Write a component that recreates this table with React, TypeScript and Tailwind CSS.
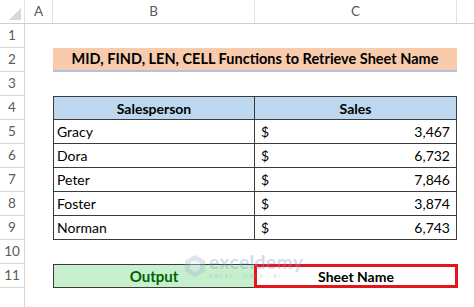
const font = { fontFamily: "Lato, 'Open Sans', 'Liberation Sans', sans-serif" };

const rowsData = [
  { name: 'Gracy', sales: '3,467' },
  { name: 'Dora', sales: '6,732' },
  { name: 'Peter', sales: '7,846' },
  { name: 'Foster', sales: '3,874' },
  { name: 'Norman', sales: '6,743' },
];

function RowHead({ n }: { n?: number }) {
  return (
    <div className="w-[25px] shrink-0 h-full flex items-center justify-center border-r border-b border-[#d6d6d6] text-[13.5px] text-[#5a5a5a]">
      {n}
    </div>
  );
}

function Row({ n, children }: { n?: number; children?: React.ReactNode }) {
  return (
    <div className="flex h-[24px]">
      <RowHead n={n} />
      <div className="w-[28px] shrink-0" />
      {children}
    </div>
  );
}

export default function App() {
  return (
    <div className="relative w-[474px] h-[307px] overflow-hidden bg-white text-black" style={font}>
      {/* column headers */}
      <div className="flex h-[24px] border-b border-[#cfcfcf] text-[13.5px] text-[#5a5a5a]">
        <div className="w-[25px] shrink-0 relative border-r border-[#e2e2e2]">
          <div className="absolute right-[3px] bottom-[3px] w-0 h-0 border-l-[12px] border-l-transparent border-b-[12px] border-b-[#d8d8d8]" />
        </div>
        <div className="w-[28px] shrink-0 flex items-center justify-center border-r border-[#e2e2e2]">A</div>
        <div className="w-[202px] shrink-0 flex items-center justify-center border-r border-[#e2e2e2]">B</div>
        <div className="w-[202px] shrink-0 flex items-center justify-center border-r border-[#e2e2e2]">C</div>
        <div className="flex-1" />
      </div>

      <Row n={1} />
      <Row n={2}>
        <div className="w-[404px] shrink-0 bg-[#f8cbad] border-b-2 border-[#a9c4e4] flex items-center justify-center text-[14.5px] font-bold">
          MID, FIND, LEN, CELL Functions to Retrieve Sheet Name
        </div>
      </Row>
      <Row n={3} />
      <Row n={4}>
        <div className="w-[202px] shrink-0 bg-[#bdd7ee] border border-[#3b3b3b] flex items-center justify-center text-[14px] font-bold">
          Salesperson
        </div>
        <div className="w-[202px] shrink-0 bg-[#bdd7ee] border-y border-r border-[#3b3b3b] flex items-center justify-center text-[14px] font-bold">
          Sales
        </div>
      </Row>
      {rowsData.map((r, i) => (
        <Row key={r.name} n={5 + i}>
          <div className="w-[202px] shrink-0 border-x border-b border-[#3b3b3b] flex items-center pl-[3px] text-[14px]">
            {r.name}
          </div>
          <div className="w-[202px] shrink-0 border-r border-b border-[#3b3b3b] flex items-center justify-between pl-[6px] pr-[6px] text-[14px]">
            <span>$</span>
            <span>{r.sales}</span>
          </div>
        </Row>
      ))}
      <Row n={10} />
      <Row n={11}>
        <div className="w-[202px] shrink-0 bg-[#c6efce] border border-[#3b3b3b] flex items-center justify-center text-[15px] font-bold text-[#006100]">
          Output
        </div>
        <div className="w-[204px] shrink-0 border-[3px] border-[#e4161d] -ml-px flex items-center justify-center text-[14px] font-bold">
          Sheet Name
        </div>
      </Row>
      <Row />

      {/* watermark */}
      <div className="absolute left-[184px] top-[252px] flex items-center gap-[3px] opacity-35 pointer-events-none">
        <svg width="22" height="24" viewBox="0 0 22 24">
          <polygon points="11,1 21,6.5 21,17.5 11,23 1,17.5 1,6.5" fill="#9fb6cf" />
          <polygon points="11,6 16,9 16,15 11,18 6,15 6,9" fill="#dfe9f3" />
        </svg>
        <div className="flex flex-col leading-none">
          <span className="text-[19px] font-bold text-[#7f9bbb] tracking-[0.5px]">exceldemy</span>
          <span className="text-[6px] text-[#8a9aae] tracking-[1.5px] mt-[2px]">EXCEL · DATA · BI</span>
        </div>
      </div>
    </div>
  );
}
